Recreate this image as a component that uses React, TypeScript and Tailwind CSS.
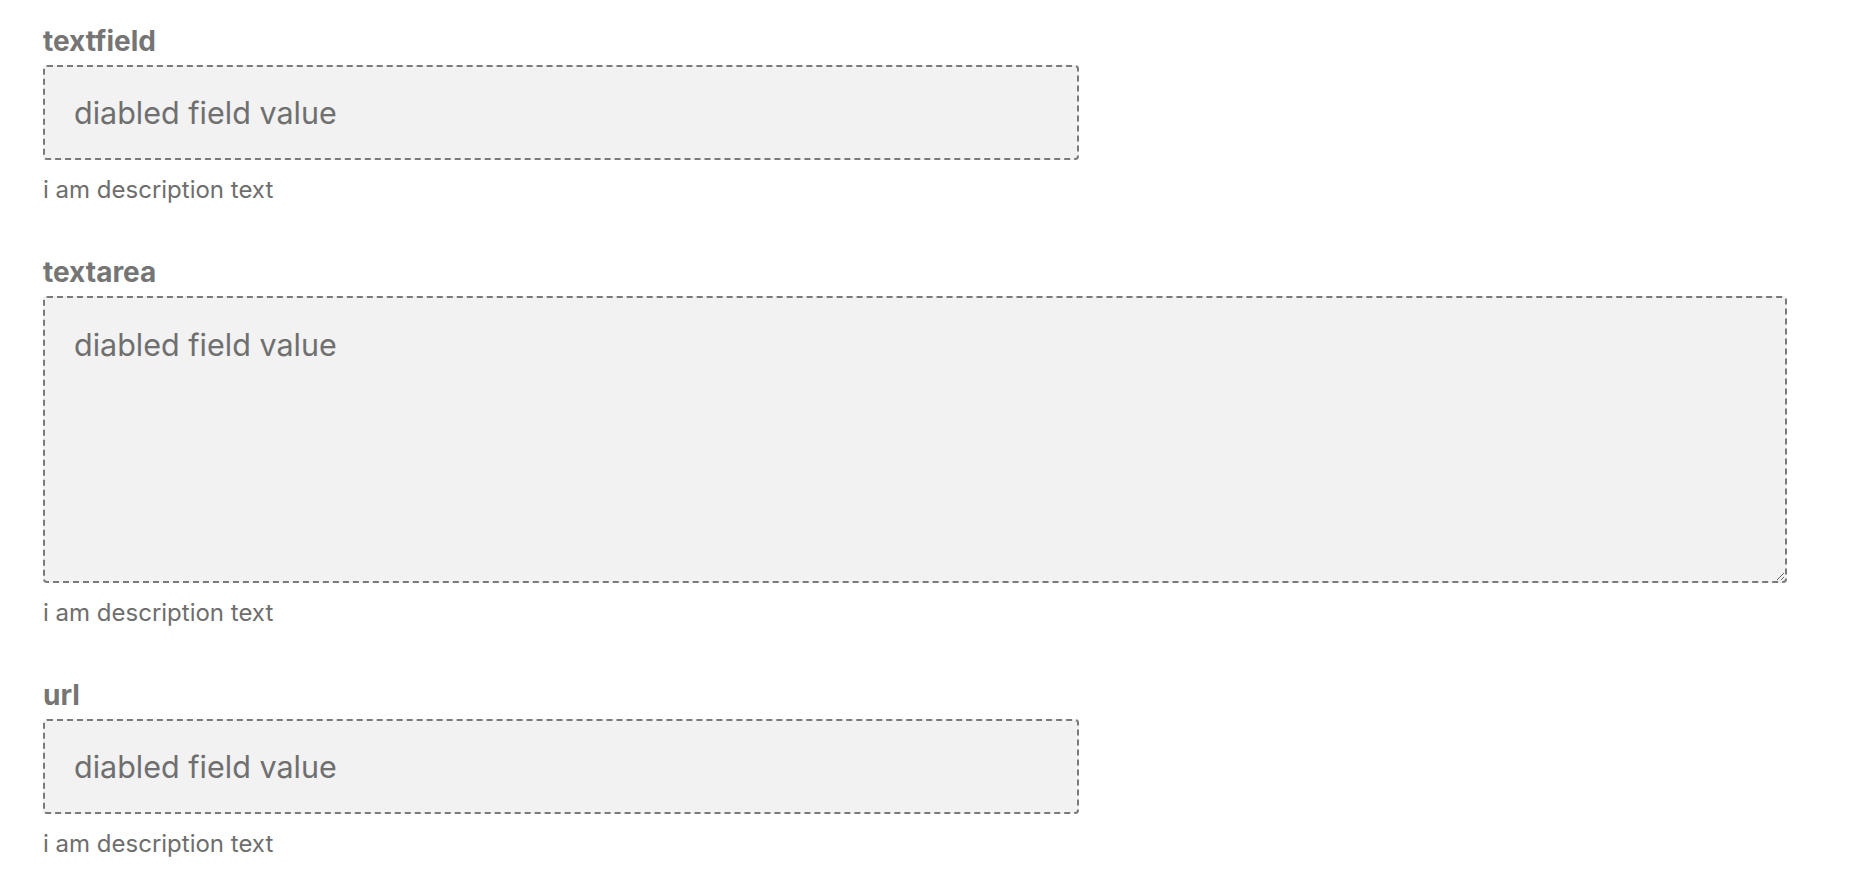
import React from "react";

const labelCls = "block text-[28px] leading-[30px] font-bold text-[#757575]";
const descCls = "mt-[15px] text-[24px] leading-[30px] text-[#6e6e6e]";
const boxCls =
  "mt-[9px] block bg-[#f2f2f2] border-2 border-dashed border-[#7a7a7a] rounded-[4px] px-[29px] text-[30.5px] text-[#6f6f6f] outline-none font-['Inter',sans-serif]";

export default function App() {
  return (
    <div className="min-h-screen bg-white pl-[43px] pt-[26px] font-['Inter',sans-serif]">
      <div className="flex flex-col gap-[52px]">
        <div className="flex flex-col">
          <label className={labelCls}>textfield</label>
          <input
            readOnly
            value="diabled field value"
            className={boxCls + " w-[1036px] h-[95px]"}
          />
          <p className={descCls}>i am description text</p>
        </div>
        <div className="flex flex-col">
          <label className={labelCls}>textarea</label>
          <textarea
            readOnly
            value="diabled field value"
            className={boxCls + " w-[1744px] h-[287px] pt-[29px] leading-[36px]"}
          />
          <p className={descCls}>i am description text</p>
        </div>
        <div className="flex flex-col">
          <label className={labelCls}>url</label>
          <input
            readOnly
            type="url"
            value="diabled field value"
            className={boxCls + " w-[1036px] h-[95px]"}
          />
          <p className={descCls}>i am description text</p>
        </div>
      </div>
    </div>
  );
}
